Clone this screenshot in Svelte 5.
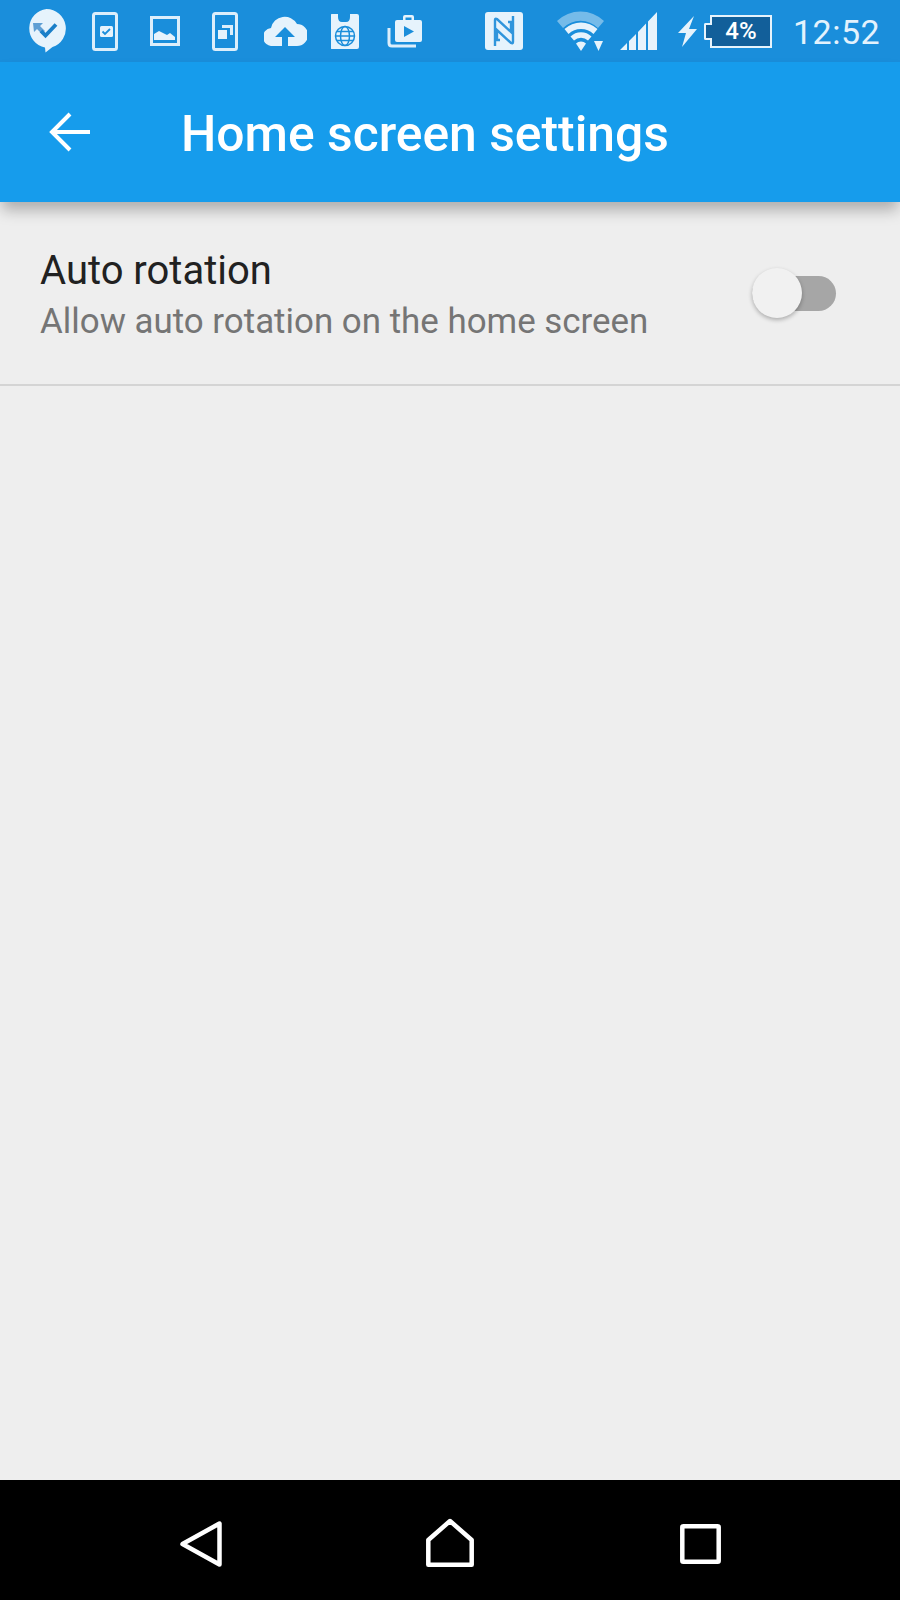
<script lang="ts">
  // Home screen settings page with an Android status bar and nav bar.
  let autoRotation = $state(false);
</script>

<div class="phone">
  <div class="status-bar">
    <!-- each icon's viewBox is its own slice of the bar, so the paths stay readable -->
    <svg class="ic" width="39" height="44" viewBox="27 10 39 44">
      <path class="w" d="M46.500 10a19.500 19.500 0 0 1 6 38l-7 5.500-.5-5A19.500 19.500 0 0 1 46.500 10z" />
      <path d="M33 24h10l-3 3 5 5-3 3-5-5-3 3z" fill="#5f9fd4" />
      <path d="M41 32l4.500 4.500L56 25.500" fill="none" stroke="#1a7fc8" stroke-width="3.800" />
    </svg>
    <svg class="ic" style:margin-left="26px" width="26" height="39" viewBox="92 12 26 39">
      <rect class="o" x="93.500" y="13.500" width="23" height="36" rx="2" />
      <path class="w" d="M101.500 26h10q1.500 0 1.500 1.500v8q0 1.500-1.500 1.500h-10q-1.500 0-1.500-1.500v-8q0-1.500 1.500-1.500z" />
      <path d="M102.500 31.500l2.500 2.500 5-5" fill="none" stroke="#1a8edb" stroke-width="1.800" />
    </svg>
    <svg class="ic" style:margin-left="32px" width="30" height="30" viewBox="150 17 30 30">
      <rect class="o" x="151.500" y="18.500" width="27" height="27" />
      <path class="w" d="M154 35l5-3 8 4 3-2 5 4v3h-21z" />
    </svg>
    <svg class="ic" style:margin-left="32px" width="26" height="39" viewBox="212 12 26 39">
      <rect class="o" x="213.500" y="13.500" width="23" height="36" rx="2" />
      <rect class="w" x="218" y="30" width="9" height="9" />
      <path class="o" d="M222 26.500h9.500v8.500" />
    </svg>
    <svg class="ic" style:margin-left="26px" width="43" height="30" viewBox="264 17 43 30">
      <path class="w" d="M273 47a9 9 0 0 1-2-18 14 14 0 0 1 26-4 11 11 0 0 1 0 22h-9V38h7l-10-10-10 10h7v9z" />
    </svg>
    <svg class="ic" style:margin-left="24px" width="29" height="36" viewBox="331 13 29 36">
      <path class="w" d="M333 14h5v3q0 5 4 5h4q4 0 4-5v-3h7q2 0 2 2v31q0 2-2 2h-25q-2 0-2-2V16q0-2 2-2z" />
      <g fill="none" stroke="#1a8edb" stroke-width="1.500">
        <circle cx="345" cy="36" r="9.500" />
        <ellipse cx="345" cy="36" rx="4.500" ry="9.500" />
        <path d="M335.500 36h19M337 31.500h16M337 40.500h16" />
      </g>
    </svg>
    <svg class="ic" style:margin-left="27px" width="36" height="33" viewBox="387 16 36 33">
      <path class="w" d="M397 21h6v-3q0-2 2-2h7q2 0 2 2v3h6q2 0 2 2v18q0 2-2 2h-23q-2 0-2-2V23q0-2 2-2zm8.500-2.500V21h6v-2.500z" fill-rule="evenodd" />
      <path d="M404 27l10 5.500-10 5.500z" fill="#1a8edb" />
      <path class="o" d="M389 29v15q0 3 3 3h24" />
    </svg>

    <svg class="ic" style:margin-left="62px" width="38" height="38" viewBox="485 12 38 38">
      <path class="w" d="M488 12h32q3 0 3 3v32q0 3-3 3h-32q-3 0-3-3V15q0-3 3-3z" />
      <path d="M495 46V20q0-2 2-1l14 13V22h-3M513 16v26q0 2-2 1L497 30v10h3" fill="none" stroke="#2f95dc" stroke-width="2.400" />
    </svg>
    <svg class="ic" style:margin-left="34px" width="48" height="40" viewBox="557 13 48 40">
      <path d="M557 23a34 34 0 0 1 47 0l-6 7a25 25 0 0 0-35 0z" fill="#fff" fill-opacity="0.4" />
      <path class="w" d="M564.500 31a24 24 0 0 1 33 0l-4 5a18 18 0 0 0-25 0zM570.500 38.500a15 15 0 0 1 21 0l-3.500 4a10 10 0 0 0-14 0zM576 45.500a7 7 0 0 1 10 0l-5 7.500z" />
      <path class="w" d="M594 43h9l-4.500 10z" />
    </svg>
    <svg class="ic" style:margin-left="15px" width="37" height="38" viewBox="620 13 37 38">
      <path class="w" d="M620 51l7-7v7zM629 42l7-7v16h-7zM638 33l8-8.500V51h-8zM648 22.500l9-9.500v38h-9z" />
    </svg>
    <svg class="ic" style:margin-left="21px" width="19" height="31" viewBox="678 15 19 31">
      <path class="w" d="M694 15L678 32h8l-4 14 15-18h-8z" />
    </svg>
    <div class="battery">
      <span class="nub"></span>
      <span class="cell">4%</span>
    </div>
    <span class="clock">12:52</span>
  </div>

  <header class="app-bar">
    <svg class="back" width="41" height="40" viewBox="0 0 41 40">
      <path d="M41 20H4M21 2L3 20l18 18" fill="none" stroke="#fff" stroke-width="4" />
    </svg>
    <h1>Home screen settings</h1>
  </header>

  <main class="content">
    <button class="row" onclick={() => (autoRotation = !autoRotation)}>
      <span class="labels">
        <span class="title">Auto rotation</span>
        <span class="sub">Allow auto rotation on the home screen</span>
      </span>
      <span class="switch" class:on={autoRotation}><span class="thumb"></span></span>
    </button>
  </main>

  <nav class="nav-bar">
    <svg width="42" height="46" viewBox="0 0 42 46">
      <path d="M39.500 2.500v41L2.500 23z" fill="none" stroke="#fff" stroke-width="4.500" stroke-linejoin="round" />
    </svg>
    <svg width="48" height="49" viewBox="0 0 48 49">
      <path d="M2.300 46.700V22L24 3l21.700 19v24.700z" fill="none" stroke="#fff" stroke-width="4.500" stroke-linejoin="round" />
    </svg>
    <svg width="41" height="40" viewBox="0 0 41 40">
      <rect x="2.300" y="2.300" width="36.400" height="35.400" rx="1" fill="none" stroke="#fff" stroke-width="4.500" />
    </svg>
  </nav>
</div>

<style>
  :global(body) {
    margin: 0;
    background: #eee;
    font-family: Roboto, "Liberation Sans", sans-serif;
  }
  .phone {
    width: 900px;
    height: 1600px;
    display: flex;
    flex-direction: column;
    overflow: hidden;
  }
  .status-bar {
    height: 62px;
    flex: none;
    background: #1a8edb;
    display: flex;
    align-items: center;
    padding-left: 27px;
    box-sizing: border-box;
    color: #e3f2fd;
  }
  .ic {
    flex: none;
    display: block;
  }
  .w {
    fill: #e6f3fc;
  }
  .o {
    fill: none;
    stroke: #dceefb;
    stroke-width: 3;
  }
  .battery {
    margin-left: 7px;
    display: flex;
    align-items: center;
    width: 68px;
    height: 33px;
    flex: none;
  }
  .nub {
    position: relative;
    width: 8px;
    height: 17px;
    margin-right: -2px;
    border: 2px solid #e6f3fc;
    border-right: none;
    box-sizing: border-box;
    border-radius: 2px 0 0 2px;
    flex: none;
    background: #125f9a;
  }
  .cell {
    flex: 1;
    height: 100%;
    box-sizing: border-box;
    border: 2px solid #e6f3fc;
    background: #125f9a;
    color: #fff;
    font-size: 24px;
    font-weight: 500;
    display: flex;
    align-items: center;
    justify-content: center;
  }
  .clock {
    margin: 2px 0 0 21px;
    font-size: 34px;
    letter-spacing: 0.5px;
    color: #e3f2fd;
  }
  .app-bar {
    height: 140px;
    flex: none;
    background: #169cec;
    display: flex;
    align-items: center;
    color: #fff;
    box-shadow: 0 10px 14px -2px rgba(0, 0, 0, 0.28);
    position: relative;
  }
  .back {
    margin-left: 49px;
    flex: none;
  }
  .app-bar h1 {
    margin: 6px 0 0 91px;
    font-size: 49.800px;
    font-weight: 500;
    line-height: 1;
  }
  .content {
    flex: 1;
    background: #eee;
  }
  .row {
    width: 100%;
    height: 184px;
    box-sizing: border-box;
    padding: 7px 64px 0 40px;
    border: none;
    border-bottom: 2px solid #d4d4d4;
    background: none;
    display: flex;
    align-items: center;
    justify-content: space-between;
    font-family: inherit;
    text-align: left;
  }
  .labels {
    display: flex;
    flex-direction: column;
  }
  .title {
    font-size: 40px;
    line-height: 50px;
    color: #212121;
  }
  .sub {
    font-size: 34.900px;
    line-height: 52px;
    color: #757575;
  }
  .switch {
    display: block;
    position: relative;
    width: 84px;
    height: 35px;
    margin-top: -7px;
    border-radius: 18px;
    background: #a6a6a6;
  }
  .thumb {
    position: absolute;
    left: 0;
    top: -8px;
    width: 50px;
    height: 50px;
    border-radius: 50%;
    background: #f1f1f1;
    box-shadow: 0 2px 4px rgba(0, 0, 0, 0.28);
  }
  .switch.on {
    background: #8cc9f2;
  }
  .switch.on .thumb {
    left: auto;
    right: 0;
    background: #169cec;
  }
  .nav-bar {
    height: 120px;
    flex: none;
    box-sizing: border-box;
    background: #000;
    display: flex;
    align-items: center;
    padding: 8px 0 0 180px;
  }
  .nav-bar svg:nth-child(2) {
    margin: -4px 0 0 204px;
  }
  .nav-bar svg:nth-child(3) {
    margin-left: 206px;
  }
</style>
